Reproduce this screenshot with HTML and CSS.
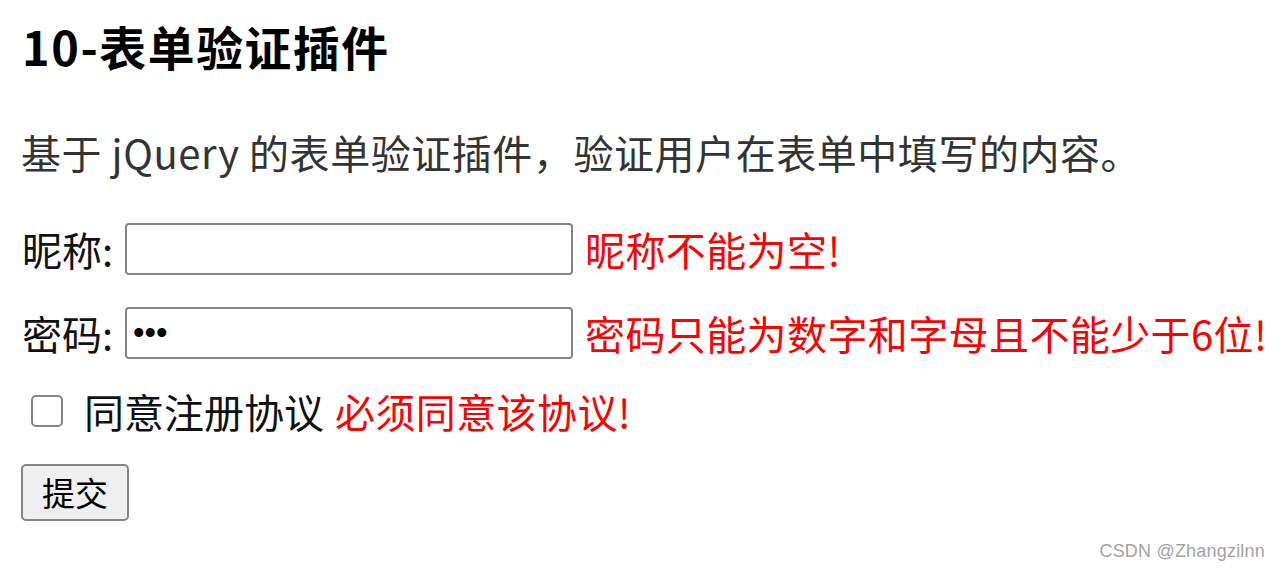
FILE: index.html
```html
<!DOCTYPE html>
<html lang="zh-CN">
<head>
<meta charset="utf-8">
<title>10-表单验证插件</title>
<link rel="stylesheet" href="styles.css">
</head>
<body>
<h3 class="title">10-表单验证插件</h3>
<p class="intro">基于 jQuery 的表单验证插件，验证用户在表单中填写的内容。</p>
<form class="form">
  <div class="row row-name">
    <label class="label" for="nick">昵称:</label>
    <input class="field" id="nick" type="text">
    <span class="error">昵称不能为空!</span>
  </div>
  <div class="row row-pass">
    <label class="label" for="pwd">密码:</label>
    <input class="field" id="pwd" type="password" value="abc">
    <span class="error">密码只能为数字和字母且不能少于6位!</span>
  </div>
  <div class="row row-agree">
    <input class="check" id="agree" type="checkbox">
    <label class="check-label" for="agree">同意注册协议</label>
    <span class="error error-tight">必须同意该协议!</span>
  </div>
  <button class="submit" type="button">提交</button>
</form>
<div class="watermark">CSDN @Zhangzilnn</div>
</body>
</html>
```

FILE: styles.css
```css
html, body {
  margin: 0;
  padding: 0;
  background: #ffffff;
}

body {
  position: relative;
  width: 1280px;
  height: 571px;
  overflow: hidden;
  padding: 18px 20px 0 20px;
  box-sizing: border-box;
  font-family: "Noto Sans CJK SC", "Noto Sans", sans-serif;
  font-size: 40px;
  color: #000;
}

.title {
  margin: 0;
  font-size: 46.8px;
  line-height: 56px;
  font-weight: 700;
  color: #000;
  padding-left: 2px;
  letter-spacing: 1.6px;
}

.intro {
  margin: 50px 0 0 0;
  font-size: 40px;
  line-height: 56px;
  color: #333;
  padding-left: 1px;
  letter-spacing: 0.55px;
}

.form {
  margin: 43px 0 0 0;
  display: flex;
  flex-direction: column;
  align-items: flex-start;
}

.row {
  display: flex;
  align-items: center;
  height: 52px;
  white-space: nowrap;
}

.row-pass {
  margin-top: 32px;
}

.row-agree {
  margin-top: 26px;
}

.label {
  width: 105px;
  padding-left: 2px;
  box-sizing: border-box;
  line-height: 50px;
  color: #111;
}

.field {
  width: 448px;
  height: 52px;
  box-sizing: border-box;
  margin: 0;
  border: 2px solid #858585;
  border-radius: 4px;
  padding: 0 6px;
  font-size: 33px;
  font-family: "Liberation Sans", sans-serif;
  background: #fff;
  color: #000;
  outline: none;
}

.error {
  margin-left: 12px;
  color: #ff0000;
  line-height: 50px;
  letter-spacing: 0.4px;
}

.error-tight {
  margin-left: 11px;
}

.check {
  -webkit-appearance: none;
  appearance: none;
  width: 32px;
  height: 32px;
  margin: 0 0 0 11px;
  box-sizing: border-box;
  border: 2px solid #858585;
  border-radius: 5px;
  background: #fff;
}

.check-label {
  margin-left: 21px;
  color: #111;
  line-height: 50px;
}

.submit {
  margin: 27px 0 0 1px;
  width: 108px;
  height: 57px;
  box-sizing: border-box;
  border: 2px solid #858585;
  border-radius: 5px;
  background: #efefef;
  font-family: "Noto Sans CJK SC", sans-serif;
  font-size: 33px;
  line-height: 1;
  padding: 0;
  color: #000;
}

.watermark {
  position: absolute;
  right: 15px;
  bottom: 9px;
  font-family: "Liberation Sans", "DejaVu Sans", sans-serif;
  font-size: 18px;
  color: #a3a3a3;
  letter-spacing: 0.2px;
}
```
